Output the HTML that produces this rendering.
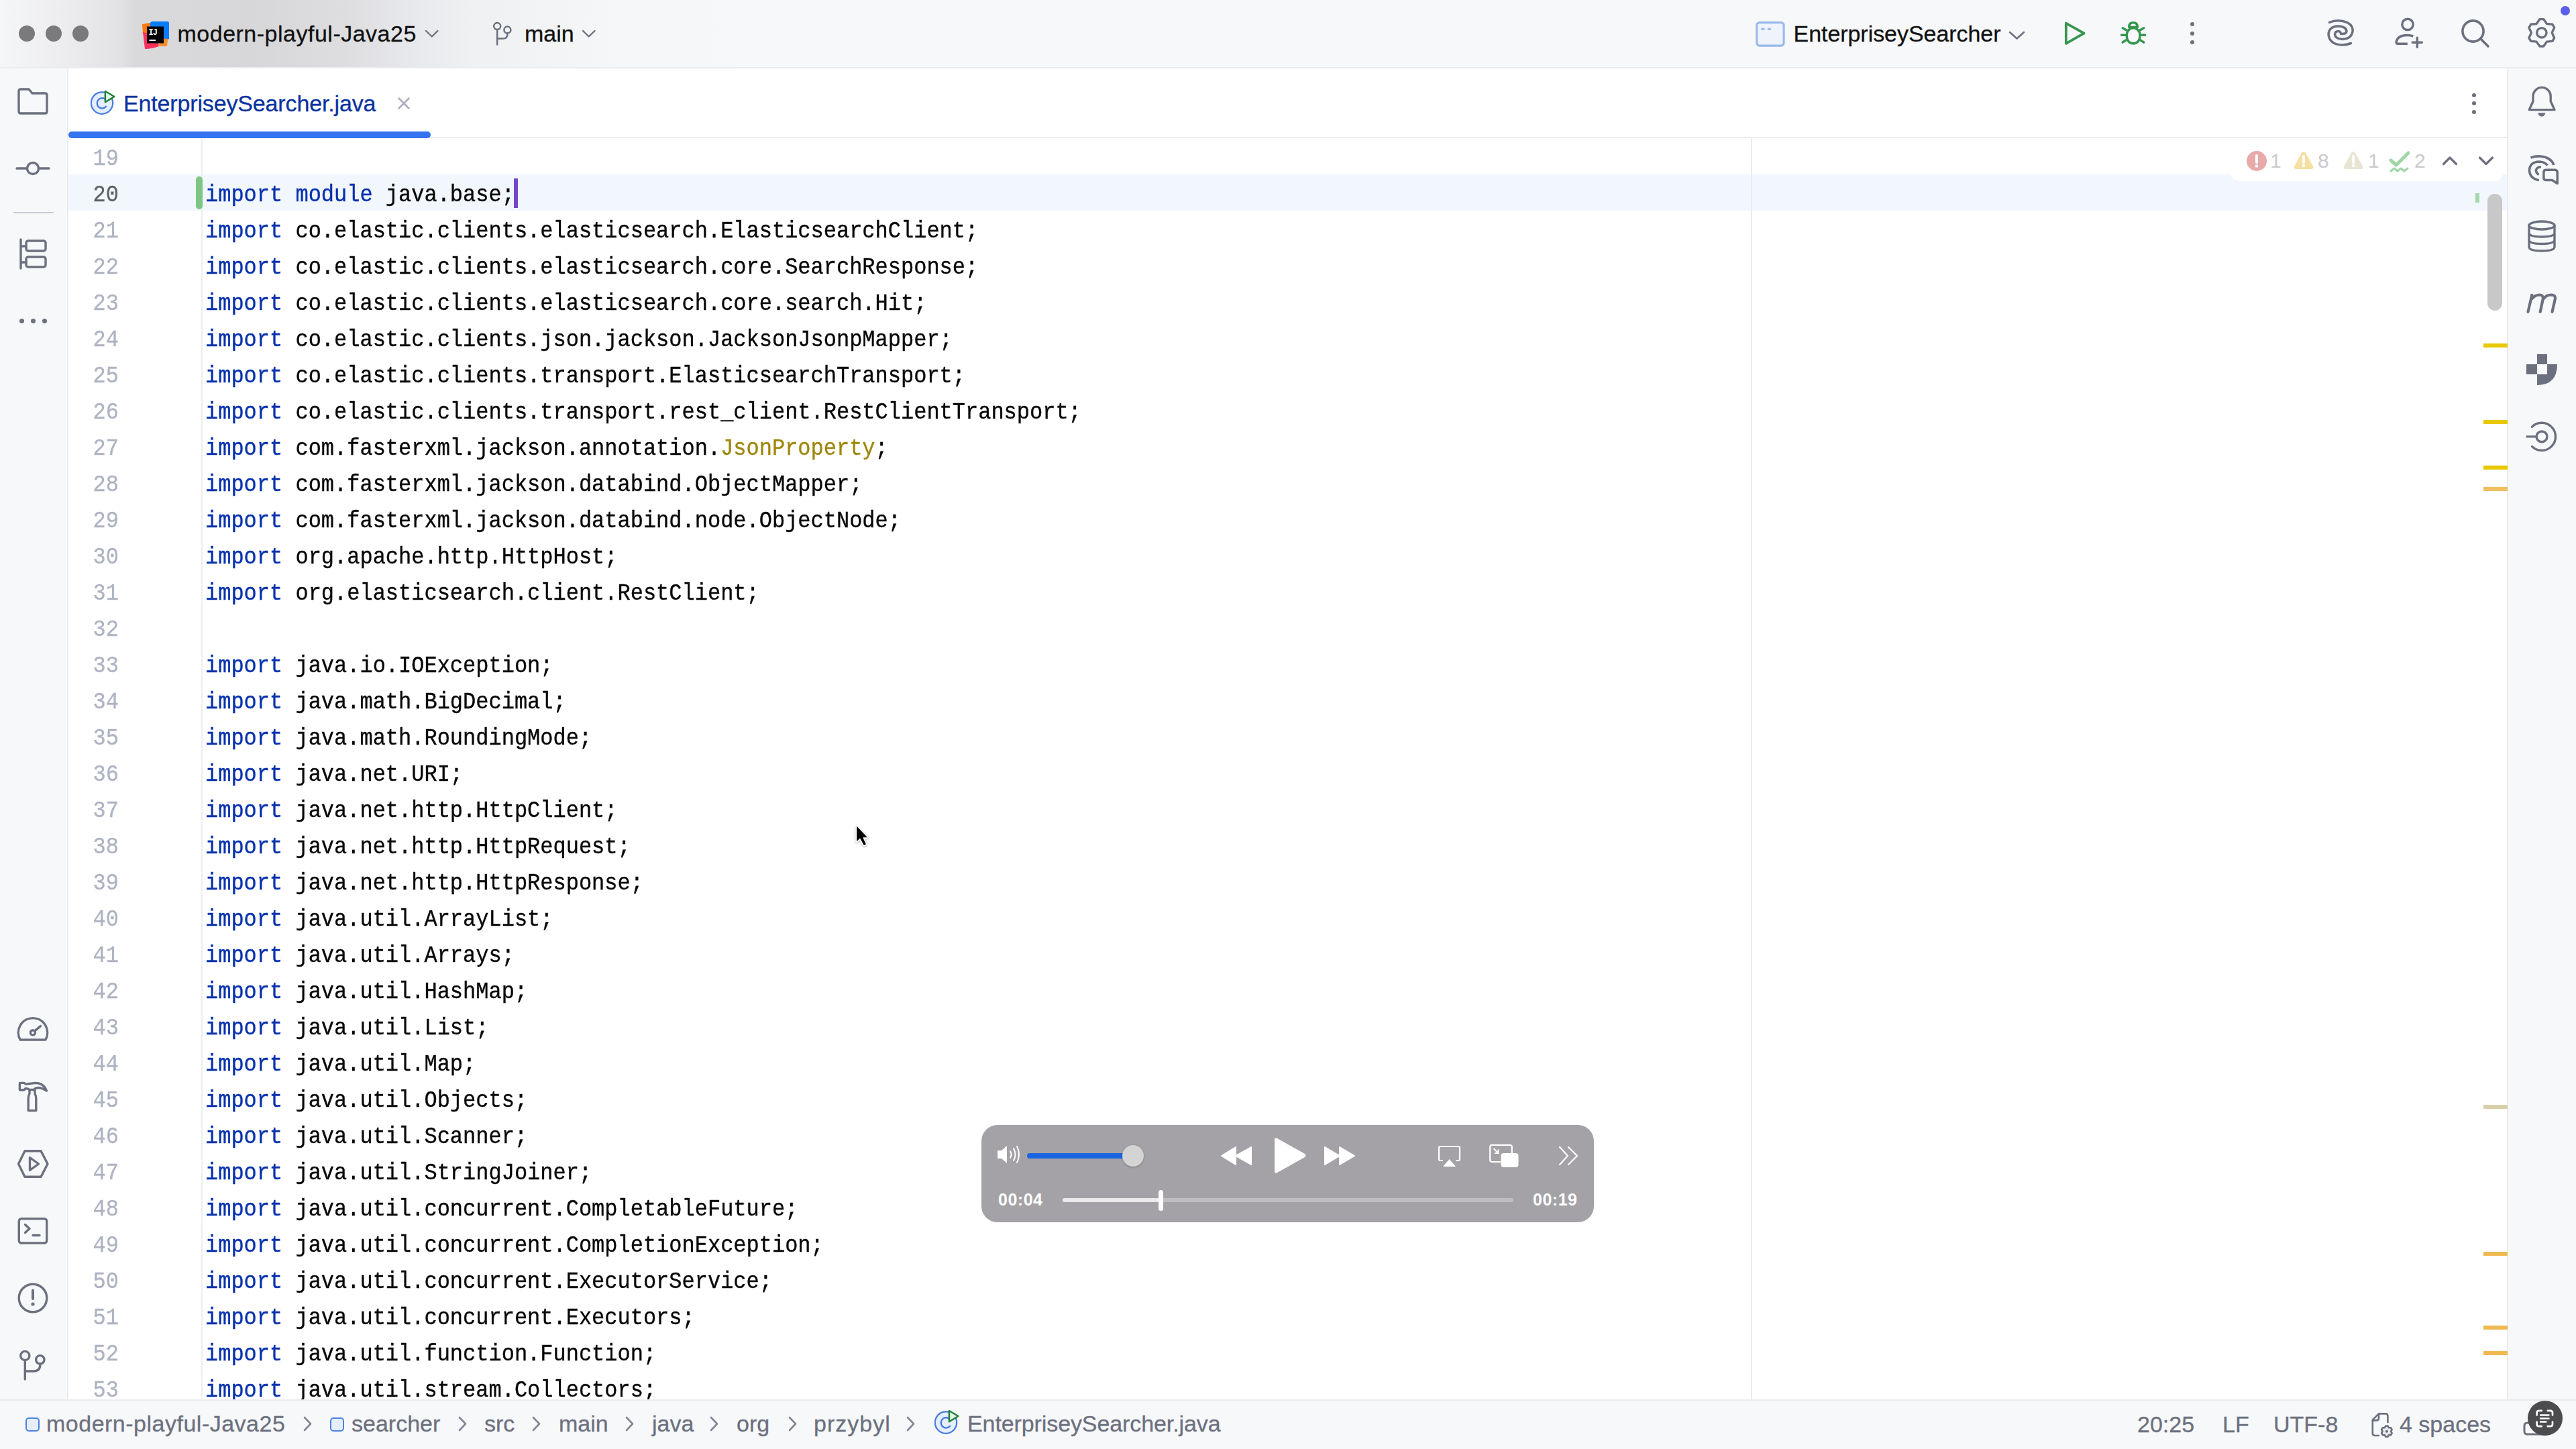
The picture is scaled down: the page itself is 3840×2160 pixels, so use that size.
<!DOCTYPE html><html><head><meta charset="utf-8"><style>
*{margin:0;padding:0;box-sizing:border-box}
html,body{width:3840px;height:2160px;overflow:hidden;background:#fff}
body{position:relative;font-family:"Liberation Sans",sans-serif}
.a{position:absolute}
.ui{position:absolute;font-family:"Liberation Sans",sans-serif;font-size:34px;line-height:40px;white-space:pre;-webkit-text-stroke:0.3px currentColor}
.code{position:absolute;left:306px;font-family:"Liberation Mono",monospace;font-size:32px;line-height:54px;white-space:pre;color:#080808;-webkit-text-stroke:0.35px currentColor;transform:scaleY(1.09);transform-origin:0 35.5px}
.ln{position:absolute;left:110px;width:67px;text-align:right;font-family:"Liberation Mono",monospace;font-size:32px;line-height:54px;color:#aeb3c2;-webkit-text-stroke:0.3px currentColor;transform:scaleY(1.09);transform-origin:0 35.5px}
.k{color:#0731ad}
.an{color:#9e880d}
</style></head><body>
<div class="a" style="left:0;top:0;width:3840px;height:100px;background:linear-gradient(90deg,#f5f6f8 0px,#ededf0 90px,#e2e2e5 180px,#d9d9dc 200px,#d7d7da 380px,#dedee1 520px,#e8e9ec 620px,#eff0f2 700px,#f5f6f8 900px,#f7f8fa 1100px,#f7f8fa 3840px)"></div>
<div class="a" style="left:0;top:100px;width:3840px;height:2px;background:#ebecf0"></div>
<div class="a" style="left:28px;top:38px;width:24px;height:24px;border-radius:12px;background:#7a7a7c"></div>
<div class="a" style="left:68px;top:38px;width:24px;height:24px;border-radius:12px;background:#7a7a7c"></div>
<div class="a" style="left:108px;top:38px;width:24px;height:24px;border-radius:12px;background:#7a7a7c"></div>
<svg style="position:absolute;left:210px;top:31px" width="44" height="44" viewBox="0 0 44 44" ><path d="M2 5 L14 3 L13 20 L3 20 Z" fill="#f97a12"/><path d="M14 3 Q15 1 17 1 L40 1 Q42 1 42 3 L42 27 L30 33 L14 20 Z" fill="#087cfa"/><path d="M3 17 L24 22 L27 38 Q16 42 6 42 Z" fill="#fe315d"/><path d="M30 26 L40 27 L39 38 L26 38 Z" fill="#fb8f2a"/><rect x="9" y="8.5" width="25" height="25" fill="#000"/><text x="11.5" y="20.5" font-family="Liberation Mono" font-weight="bold" font-size="12" fill="#fff" letter-spacing="-1">IJ</text><rect x="12.5" y="28" width="9.5" height="2" fill="#fff"/></svg>
<div class="ui" style="left:264.5px;top:30px;color:#111;letter-spacing:0.5px">modern-playful-Java25</div>
<svg style="position:absolute;left:633px;top:43px" width="21.5" height="14.5" viewBox="0 0 21.5 14.5" ><path d="M2 3 L10.75 11.5 L19.5 3" fill="none" stroke="#6c707e" stroke-width="2.4" stroke-linecap="round" stroke-linejoin="round"/></svg>
<svg style="position:absolute;left:720px;top:25px" width="60" height="50" viewBox="0 0 60 50" ><circle cx="21.2" cy="14.1" r="5" fill="none" stroke="#6c707e" stroke-width="2.5"/><circle cx="36.4" cy="19.6" r="5" fill="none" stroke="#6c707e" stroke-width="2.5"/><path d="M21.2 19.1 V41.6 M21.2 32.6 H30 Q36.4 32.6 36.4 26 V24.6" fill="none" stroke="#6c707e" stroke-width="2.5" stroke-linecap="round"/></svg>
<div class="ui" style="left:782px;top:30px;color:#111">main</div>
<svg style="position:absolute;left:867.3px;top:43px" width="21.5" height="14.5" viewBox="0 0 21.5 14.5" ><path d="M2 3 L10.75 11.5 L19.5 3" fill="none" stroke="#6c707e" stroke-width="2.4" stroke-linecap="round" stroke-linejoin="round"/></svg>
<svg style="position:absolute;left:2605px;top:20px" width="75" height="60" viewBox="0 0 75 60" ><rect x="13.8" y="13.6" width="40.3" height="34.5" rx="4" fill="#eef3fc" stroke="#9ab8eb" stroke-width="3.1"/><path d="M21.5 23.2 H24.2 M31.1 23.2 H33.7" stroke="#9ab8eb" stroke-width="3" stroke-linecap="round"/></svg>
<div class="ui" style="left:2673.5px;top:30px;color:#111;letter-spacing:-0.05px">EnterpriseySearcher</div>
<svg style="position:absolute;left:2994px;top:45px" width="25" height="15.5" viewBox="0 0 25 15.5" ><path d="M2 3 L12.5 12.5 L23 3" fill="none" stroke="#6c707e" stroke-width="2.5" stroke-linecap="round" stroke-linejoin="round"/></svg>
<svg style="position:absolute;left:3060px;top:20px" width="60" height="60" viewBox="0 0 60 60" ><path d="M19.8 14.6 L46.6 29.7 L19.8 44.8 Z" fill="none" stroke="#369650" stroke-width="3.7" stroke-linejoin="round"/></svg>
<svg style="position:absolute;left:3140px;top:30px" width="80" height="50" viewBox="0 0 80 50" ><rect x="30.4" y="11.8" width="19.4" height="23" rx="9.7" fill="none" stroke="#369650" stroke-width="3.5"/><path d="M33.7 10.5 Q33.7 3.8 40 3.8 Q46.3 3.8 46.3 10.5 Z" fill="none" stroke="#369650" stroke-width="3.5" stroke-linejoin="round"/><path d="M24.2 11.8 L30.4 15.3 M22.5 22.3 H28.3 M24.2 33.1 L30 29.6 M55.7 11.8 L49.6 15.3 M57.7 22.3 H51.9 M55.7 33.1 L50 29.6" stroke="#369650" stroke-width="3.5" stroke-linecap="round"/></svg>
<div class="a" style="left:3265px;top:33px;width:6px;height:6px;border-radius:3px;background:#6c707e"></div>
<div class="a" style="left:3265px;top:47px;width:6px;height:6px;border-radius:3px;background:#6c707e"></div>
<div class="a" style="left:3265px;top:60px;width:6px;height:6px;border-radius:3px;background:#6c707e"></div>
<svg style="position:absolute;left:3460px;top:20px" width="60" height="60" viewBox="0 0 60 60" ><path d="M12.4 13.3 Q26 8 40 14 Q48 19 47 27 Q45 38 32 38.5 Q21 38 20.5 31 Q21 26.5 25.5 26.5 Q28 26.5 29 28.5" fill="none" stroke="#6c707e" stroke-width="3.5" stroke-linecap="round"/><path d="M44.5 44.5 Q38 47 31 47 Q12 46 11 31 Q12 19.5 25 19 Q38 19.5 38 27 Q37 31 29.5 30.5" fill="none" stroke="#6c707e" stroke-width="3.5" stroke-linecap="round"/></svg>
<svg style="position:absolute;left:3560px;top:20px" width="60" height="60" viewBox="0 0 60 60" ><circle cx="29" cy="16.4" r="8.2" fill="none" stroke="#6c707e" stroke-width="3.5"/><path d="M28.8 45.2 H14.5 Q11.8 45.2 12 42.5 Q14 32.5 28.5 32.5 Q33.5 32.5 37.3 34" fill="none" stroke="#6c707e" stroke-width="3.5"/><path d="M43.3 36.3 V50.3 M36.3 43.3 H50.3" stroke="#6c707e" stroke-width="3.5" stroke-linecap="round"/></svg>
<svg style="position:absolute;left:3660px;top:20px" width="60" height="60" viewBox="0 0 60 60" ><circle cx="26.5" cy="26.5" r="15.6" fill="none" stroke="#6c707e" stroke-width="3.6"/><path d="M38 38 L49 49" stroke="#6c707e" stroke-width="3.6" stroke-linecap="round"/></svg>
<svg style="position:absolute;left:3760px;top:20px" width="60" height="60" viewBox="0 0 60 60" ><path d="M25.96 8.60 L31.64 8.60 L36.50 15.46 L44.88 16.24 L47.71 21.16 L44.20 28.80 L47.71 36.44 L44.88 41.36 L36.50 42.14 L31.64 49.00 L25.96 49.00 L21.10 42.14 L12.72 41.36 L9.89 36.44 L13.40 28.80 L9.89 21.16 L12.72 16.24 L21.10 15.46 Z" fill="none" stroke="#6c707e" stroke-width="3.4" stroke-linejoin="round"/><circle cx="28.8" cy="28.8" r="7.2" fill="none" stroke="#6c707e" stroke-width="3.4"/></svg>
<div class="a" style="left:3817px;top:9px;width:14px;height:14px;border-radius:7px;background:#5a5ee8"></div>
<div class="a" style="left:0;top:102px;width:101px;height:1984px;background:#f7f8fa"></div>
<div class="a" style="left:100px;top:102px;width:2px;height:1984px;background:#ebecf0"></div>
<svg style="position:absolute;left:24px;top:130px" width="50" height="42" viewBox="0 0 50 42" ><path d="M4 6 Q4 3 7 3 L19 3 L24 9 L43 9 Q46 9 46 12 L46 36 Q46 39 43 39 L7 39 Q4 39 4 36 Z" fill="none" stroke="#6c707e" stroke-width="3.4" stroke-linecap="round" stroke-linejoin="round"/></svg>
<svg style="position:absolute;left:22px;top:236px" width="54" height="30" viewBox="0 0 54 30" ><circle cx="27" cy="15" r="8.5" fill="none" stroke="#6c707e" stroke-width="3.4" stroke-linecap="round" stroke-linejoin="round"/><path d="M3 15 H18.5 M35.5 15 H51" fill="none" stroke="#6c707e" stroke-width="3.4" stroke-linecap="round" stroke-linejoin="round"/></svg>
<div class="a" style="left:20px;top:315.5px;width:60px;height:2px;background:#c9ccd6"></div>
<svg style="position:absolute;left:27px;top:354px" width="46" height="50" viewBox="0 0 46 50" ><path d="M4 3 V46 M4 13 H12 M4 37 H12" fill="none" stroke="#6c707e" stroke-width="3.4" stroke-linecap="round" stroke-linejoin="round"/><rect x="12" y="5" width="29" height="15" rx="3" fill="none" stroke="#6c707e" stroke-width="3.4" stroke-linecap="round" stroke-linejoin="round"/><rect x="12" y="29" width="29" height="15" rx="3" fill="none" stroke="#6c707e" stroke-width="3.4" stroke-linecap="round" stroke-linejoin="round"/></svg>
<div class="a" style="left:28.5px;top:474.5px;width:7px;height:7px;border-radius:4px;background:#6c707e"></div>
<div class="a" style="left:45.5px;top:474.5px;width:7px;height:7px;border-radius:4px;background:#6c707e"></div>
<div class="a" style="left:62.5px;top:474.5px;width:7px;height:7px;border-radius:4px;background:#6c707e"></div>
<svg style="position:absolute;left:23px;top:1515px" width="52" height="42" viewBox="0 0 52 42" ><path d="M7.1 35 A21.7 21.7 0 1 1 44.9 35 Z" fill="none" stroke="#6c707e" stroke-width="3.4" stroke-linecap="round" stroke-linejoin="round"/><circle cx="25.9" cy="24.3" r="3.6" fill="none" stroke="#6c707e" stroke-width="3.4" stroke-linecap="round" stroke-linejoin="round"/><path d="M29 21.6 L37.4 14.6" fill="none" stroke="#6c707e" stroke-width="3.4" stroke-linecap="round" stroke-linejoin="round"/></svg>
<svg style="position:absolute;left:20px;top:1600px" width="60" height="70" viewBox="0 0 60 70" ><path d="M9.4 14.4 L16 14.4 Q18 16.5 21 15.8 L33 14.4 Q45 14.4 49.5 26 Q42 21 36 21.5 Q32 22 30 24.5 L24 24.5 Q22 22.5 18 22.5 L16 24.7 H9.4 Z" fill="none" stroke="#6c707e" stroke-width="3.4" stroke-linecap="round" stroke-linejoin="round"/><path d="M24 24.5 V30.5 Q22.2 33.5 22.2 37 V55.5 H33.8 V37 Q33.8 33.5 32 30.5 V24.5" fill="none" stroke="#6c707e" stroke-width="3.4" stroke-linecap="round" stroke-linejoin="round"/></svg>
<svg style="position:absolute;left:23px;top:1712px" width="52" height="46" viewBox="0 0 52 46" ><path d="M14 3.8 H38 L48 23 L38 42.2 H14 L4.5 23 Z" fill="none" stroke="#6c707e" stroke-width="3.4" stroke-linecap="round" stroke-linejoin="round"/><path d="M21.5 13.5 L34.5 23 L21.5 32.5 Z" fill="none" stroke="#6c707e" stroke-width="3.4" stroke-linecap="round" stroke-linejoin="round"/></svg>
<svg style="position:absolute;left:24px;top:1813px" width="50" height="44" viewBox="0 0 50 44" ><rect x="4.3" y="3.7" width="41.4" height="36.3" rx="3.5" fill="none" stroke="#6c707e" stroke-width="3.4" stroke-linecap="round" stroke-linejoin="round"/><path d="M13.5 12.5 L20 18.5 L13.5 24.5 M25 28.5 H35" fill="none" stroke="#6c707e" stroke-width="3.4" stroke-linecap="round" stroke-linejoin="round"/></svg>
<svg style="position:absolute;left:24px;top:1910px" width="50" height="50" viewBox="0 0 50 50" ><circle cx="25" cy="25" r="20.8" fill="none" stroke="#6c707e" stroke-width="3.4" stroke-linecap="round" stroke-linejoin="round"/><path d="M25 13.5 V26" stroke="#6c707e" stroke-width="4" stroke-linecap="round"/><circle cx="25" cy="34" r="2.6" fill="#6c707e"/></svg>
<svg style="position:absolute;left:26px;top:2011px" width="44" height="48" viewBox="0 0 44 48" ><circle cx="11.3" cy="10" r="6.6" fill="none" stroke="#6c707e" stroke-width="3.4" stroke-linecap="round" stroke-linejoin="round"/><circle cx="33.8" cy="15.8" r="6.2" fill="none" stroke="#6c707e" stroke-width="3.4" stroke-linecap="round" stroke-linejoin="round"/><path d="M11.3 16.6 V45 M11.3 33 H24 Q33.8 33 33.8 23.5 V22" fill="none" stroke="#6c707e" stroke-width="3.4" stroke-linecap="round" stroke-linejoin="round"/></svg>
<div class="a" style="left:3738px;top:102px;width:102px;height:1984px;background:#f7f8fa"></div>
<div class="a" style="left:3737px;top:206px;width:2px;height:1880px;background:#ebecf0"></div>
<div class="a" style="left:3737px;top:102px;width:2px;height:104px;background:#ebecf0"></div>
<svg style="position:absolute;left:3750px;top:110px" width="80" height="180" viewBox="0 0 80 180" ><path d="M26 41 V33.5 A13.1 13.1 0 0 1 52.2 33.5 V41 L58 53.6 H20.2 Z" fill="none" stroke="#6c707e" stroke-width="3.4" stroke-linecap="round" stroke-linejoin="round"/><path d="M33.3 58.2 H44.3 A5.5 5.5 0 0 1 33.3 58.2 Z" fill="#6c707e"/><path d="M22.5 125 Q30 122.5 37 123 Q53 124.5 57 136" fill="none" stroke="#6c707e" stroke-width="3.6"/><path d="M47.5 136.5 Q43 131 35 131 Q21 131.5 20.5 144 Q21 156 34.8 158.8" fill="none" stroke="#6c707e" stroke-width="3.6"/><path d="M38 139 Q32 138.5 30.5 143.5 Q30 147.5 34.5 150.5" fill="none" stroke="#6c707e" stroke-width="3.6"/><path d="M45.5 143.3 H58.5 Q62.2 143.3 62.2 147 V163.5 L54.5 158.6 H45.5 Q41.9 158.6 41.9 155 V147 Q41.9 143.3 45.5 143.3 Z" fill="none" stroke="#6c707e" stroke-width="3.5" stroke-linejoin="round"/></svg>
<svg style="position:absolute;left:3766px;top:327px" width="46" height="52" viewBox="0 0 46 52" ><ellipse cx="23" cy="9" rx="19" ry="6" fill="none" stroke="#6c707e" stroke-width="3.4" stroke-linecap="round" stroke-linejoin="round"/><path d="M4 9 V41 Q4 47 23 47 Q42 47 42 41 V9 M4 20 Q4 26 23 26 Q42 26 42 20 M4 30.5 Q4 36.5 23 36.5 Q42 36.5 42 30.5" fill="none" stroke="#6c707e" stroke-width="3.4" stroke-linecap="round" stroke-linejoin="round"/></svg>
<svg style="position:absolute;left:3755px;top:420px" width="70" height="60" viewBox="0 0 70 60" ><path d="M13.5 44.9 L19.3 19.8 M19.8 25 Q24 19.5 31 19.5 Q36.5 20 35.8 25.5 L31.7 44.9 M37 25 Q41 19.5 48.5 19.5 Q55 20 53.8 26 L49.5 44.9" fill="none" stroke="#6c707e" stroke-width="4.2" stroke-linecap="round" stroke-linejoin="round"/></svg>
<svg style="position:absolute;left:3766px;top:528px" width="46" height="46" viewBox="0 0 46 46" ><path d="M16 0 H31 V15 H16 Z M0 15 H16 V30 H0 Z M31 15 H46 Q46 46 16 46 V30 H31 Z" fill="#6c707e"/></svg>
<svg style="position:absolute;left:3755px;top:620px" width="70" height="60" viewBox="0 0 70 60" ><path d="M19.5 16.2 A20.6 20.6 0 1 1 19.5 45.6" fill="none" stroke="#6c707e" stroke-width="3.4" stroke-linecap="round" stroke-linejoin="round"/><circle cx="34" cy="30.9" r="7.9" fill="none" stroke="#6c707e" stroke-width="3.4" stroke-linecap="round" stroke-linejoin="round"/><path d="M12 30.9 H26" fill="none" stroke="#6c707e" stroke-width="3.4" stroke-linecap="round" stroke-linejoin="round"/></svg>
<div class="a" style="left:102px;top:204px;width:3635px;height:2px;background:#ebecf0"></div>
<svg style="position:absolute;left:135px;top:134px" width="40" height="40" viewBox="0 0 40 40" ><circle cx="17" cy="19.6" r="16.2" fill="#e4eefd" stroke="#4a7be0" stroke-width="2.3"/><path d="M21.1 13.3 A7.6 7.6 0 1 0 23.1 24.8" fill="none" stroke="#4a7be0" stroke-width="2.3" stroke-linecap="round"/><path d="M21.9 2 L35.4 10 L21.9 18.3 Z" fill="#e6fae8" stroke="#23803a" stroke-width="2.5" stroke-linejoin="round"/></svg>
<div class="ui" style="left:184px;top:133.5px;color:#0a32a0;letter-spacing:-0.15px">EnterpriseySearcher.java</div>
<svg style="position:absolute;left:590px;top:142px" width="24" height="24" viewBox="0 0 24 24" ><path d="M4.5 4.5 L19.5 19.5 M19.5 4.5 L4.5 19.5" stroke="#a8adbd" stroke-width="2.5" stroke-linecap="round"/></svg>
<div class="a" style="left:102px;top:196px;width:540px;height:10px;border-radius:5px;background:#3574f0"></div>
<div class="a" style="left:3685px;top:138.5px;width:6px;height:6px;border-radius:3px;background:#6c707e"></div>
<div class="a" style="left:3685px;top:151px;width:6px;height:6px;border-radius:3px;background:#6c707e"></div>
<div class="a" style="left:3685px;top:163.5px;width:6px;height:6px;border-radius:3px;background:#6c707e"></div>
<div class="a" style="left:102px;top:260px;width:3635px;height:54px;background:#f2f6fd"></div>
<div class="a" style="left:300px;top:206px;width:2px;height:1880px;background:#eeeff2"></div>
<div class="a" style="left:2610px;top:206px;width:2px;height:1880px;background:#ebecf0"></div>
<div class="a" style="left:292px;top:263px;width:10px;height:49px;border-radius:5px;background:#7fc585"></div>
<div class="ln" style="top:210.5px;">19</div>
<div class="ln" style="top:264.5px;color:#5f626d">20</div>
<div class="code" style="top:264.5px"><span class="k">import module</span> java.base;</div>
<div class="ln" style="top:318.5px;">21</div>
<div class="code" style="top:318.5px"><span class="k">import</span> co.elastic.clients.elasticsearch.ElasticsearchClient;</div>
<div class="ln" style="top:372.5px;">22</div>
<div class="code" style="top:372.5px"><span class="k">import</span> co.elastic.clients.elasticsearch.core.SearchResponse;</div>
<div class="ln" style="top:426.5px;">23</div>
<div class="code" style="top:426.5px"><span class="k">import</span> co.elastic.clients.elasticsearch.core.search.Hit;</div>
<div class="ln" style="top:480.5px;">24</div>
<div class="code" style="top:480.5px"><span class="k">import</span> co.elastic.clients.json.jackson.JacksonJsonpMapper;</div>
<div class="ln" style="top:534.5px;">25</div>
<div class="code" style="top:534.5px"><span class="k">import</span> co.elastic.clients.transport.ElasticsearchTransport;</div>
<div class="ln" style="top:588.5px;">26</div>
<div class="code" style="top:588.5px"><span class="k">import</span> co.elastic.clients.transport.rest_client.RestClientTransport;</div>
<div class="ln" style="top:642.5px;">27</div>
<div class="code" style="top:642.5px"><span class="k">import</span> com.fasterxml.jackson.annotation.<span class="an">JsonProperty</span>;</div>
<div class="ln" style="top:696.5px;">28</div>
<div class="code" style="top:696.5px"><span class="k">import</span> com.fasterxml.jackson.databind.ObjectMapper;</div>
<div class="ln" style="top:750.5px;">29</div>
<div class="code" style="top:750.5px"><span class="k">import</span> com.fasterxml.jackson.databind.node.ObjectNode;</div>
<div class="ln" style="top:804.5px;">30</div>
<div class="code" style="top:804.5px"><span class="k">import</span> org.apache.http.HttpHost;</div>
<div class="ln" style="top:858.5px;">31</div>
<div class="code" style="top:858.5px"><span class="k">import</span> org.elasticsearch.client.RestClient;</div>
<div class="ln" style="top:912.5px;">32</div>
<div class="ln" style="top:966.5px;">33</div>
<div class="code" style="top:966.5px"><span class="k">import</span> java.io.IOException;</div>
<div class="ln" style="top:1020.5px;">34</div>
<div class="code" style="top:1020.5px"><span class="k">import</span> java.math.BigDecimal;</div>
<div class="ln" style="top:1074.5px;">35</div>
<div class="code" style="top:1074.5px"><span class="k">import</span> java.math.RoundingMode;</div>
<div class="ln" style="top:1128.5px;">36</div>
<div class="code" style="top:1128.5px"><span class="k">import</span> java.net.URI;</div>
<div class="ln" style="top:1182.5px;">37</div>
<div class="code" style="top:1182.5px"><span class="k">import</span> java.net.http.HttpClient;</div>
<div class="ln" style="top:1236.5px;">38</div>
<div class="code" style="top:1236.5px"><span class="k">import</span> java.net.http.HttpRequest;</div>
<div class="ln" style="top:1290.5px;">39</div>
<div class="code" style="top:1290.5px"><span class="k">import</span> java.net.http.HttpResponse;</div>
<div class="ln" style="top:1344.5px;">40</div>
<div class="code" style="top:1344.5px"><span class="k">import</span> java.util.ArrayList;</div>
<div class="ln" style="top:1398.5px;">41</div>
<div class="code" style="top:1398.5px"><span class="k">import</span> java.util.Arrays;</div>
<div class="ln" style="top:1452.5px;">42</div>
<div class="code" style="top:1452.5px"><span class="k">import</span> java.util.HashMap;</div>
<div class="ln" style="top:1506.5px;">43</div>
<div class="code" style="top:1506.5px"><span class="k">import</span> java.util.List;</div>
<div class="ln" style="top:1560.5px;">44</div>
<div class="code" style="top:1560.5px"><span class="k">import</span> java.util.Map;</div>
<div class="ln" style="top:1614.5px;">45</div>
<div class="code" style="top:1614.5px"><span class="k">import</span> java.util.Objects;</div>
<div class="ln" style="top:1668.5px;">46</div>
<div class="code" style="top:1668.5px"><span class="k">import</span> java.util.Scanner;</div>
<div class="ln" style="top:1722.5px;">47</div>
<div class="code" style="top:1722.5px"><span class="k">import</span> java.util.StringJoiner;</div>
<div class="ln" style="top:1776.5px;">48</div>
<div class="code" style="top:1776.5px"><span class="k">import</span> java.util.concurrent.CompletableFuture;</div>
<div class="ln" style="top:1830.5px;">49</div>
<div class="code" style="top:1830.5px"><span class="k">import</span> java.util.concurrent.CompletionException;</div>
<div class="ln" style="top:1884.5px;">50</div>
<div class="code" style="top:1884.5px"><span class="k">import</span> java.util.concurrent.ExecutorService;</div>
<div class="ln" style="top:1938.5px;">51</div>
<div class="code" style="top:1938.5px"><span class="k">import</span> java.util.concurrent.Executors;</div>
<div class="ln" style="top:1992.5px;">52</div>
<div class="code" style="top:1992.5px"><span class="k">import</span> java.util.function.Function;</div>
<div class="ln" style="top:2046.5px;">53</div>
<div class="code" style="top:2046.5px"><span class="k">import</span> java.util.stream.Collectors;</div>
<div class="a" style="left:766px;top:266px;width:6px;height:44px;background:#7446cc"></div>
<div class="a" style="left:3325px;top:206px;width:407px;height:64px;background:#fff;border-radius:0 0 14px 14px"></div>
<svg style="position:absolute;left:3348px;top:224px" width="32" height="32" viewBox="0 0 32 32" ><circle cx="16" cy="16" r="15" fill="#e7a9a9"/><path d="M16 8 V18" stroke="#fff" stroke-width="4" stroke-linecap="round"/><circle cx="16" cy="23.5" r="2.3" fill="#fff"/></svg>
<div class="a" style="left:3384px;top:222px;font-family:'Liberation Sans';font-size:30px;line-height:36px;color:#c9cacd">1</div>
<svg style="position:absolute;left:3417px;top:223px" width="34" height="32" viewBox="0 0 34 32" ><path d="M17 3 Q19 3 20 5 L31 25 Q32 29 28 29 L6 29 Q2 29 3 25 L14 5 Q15 3 17 3 Z" fill="#f5dfa1"/><path d="M17 10 V19" stroke="#fff" stroke-width="4" stroke-linecap="round"/><circle cx="17" cy="24" r="2.2" fill="#fff"/></svg>
<div class="a" style="left:3455px;top:222px;font-family:'Liberation Sans';font-size:30px;line-height:36px;color:#c9cacd">8</div>
<svg style="position:absolute;left:3491px;top:223px" width="34" height="32" viewBox="0 0 34 32" ><path d="M17 3 Q19 3 20 5 L31 25 Q32 29 28 29 L6 29 Q2 29 3 25 L14 5 Q15 3 17 3 Z" fill="#e9e5d4"/><path d="M17 10 V19" stroke="#fff" stroke-width="4" stroke-linecap="round"/><circle cx="17" cy="24" r="2.2" fill="#fff"/></svg>
<div class="a" style="left:3530px;top:222px;font-family:'Liberation Sans';font-size:30px;line-height:36px;color:#c9cacd">1</div>
<svg style="position:absolute;left:3560px;top:224px" width="36" height="36" viewBox="0 0 36 36" ><path d="M4 15 L12 22 L30 4" fill="none" stroke="#9fd6a6" stroke-width="5" stroke-linecap="round" stroke-linejoin="round"/><path d="M4 31 L9 27 L14 31 L19 27 L24 31 L29 27" fill="none" stroke="#9fd6a6" stroke-width="3" stroke-linecap="round" stroke-linejoin="round"/></svg>
<div class="a" style="left:3599px;top:222px;font-family:'Liberation Sans';font-size:30px;line-height:36px;color:#c9cacd">2</div>
<svg style="position:absolute;left:3640px;top:231px" width="24" height="17" viewBox="0 0 24 17" ><path d="M2.5 13.5 L12 4 L21.5 13.5" fill="none" stroke="#6c707e" stroke-width="3.2" stroke-linecap="round" stroke-linejoin="round"/></svg>
<svg style="position:absolute;left:3694px;top:231px" width="24" height="17" viewBox="0 0 24 17" ><path d="M2.5 4 L12 13.5 L21.5 4" fill="none" stroke="#6c707e" stroke-width="3.2" stroke-linecap="round" stroke-linejoin="round"/></svg>
<div class="a" style="left:3708px;top:289px;width:22px;height:174px;border-radius:11px;background:#c8c8c9"></div>
<div class="a" style="left:3690px;top:288px;width:6px;height:14px;background:#a6d8ad"></div>
<div class="a" style="left:3702px;top:512px;width:36px;height:6px;background:#e8c800"></div>
<div class="a" style="left:3702px;top:626px;width:36px;height:6px;background:#e8c800"></div>
<div class="a" style="left:3702px;top:694px;width:36px;height:6px;background:#e8c800"></div>
<div class="a" style="left:3702px;top:726px;width:36px;height:6px;background:#f0c060"></div>
<div class="a" style="left:3702px;top:1647px;width:36px;height:6px;background:#dacfab"></div>
<div class="a" style="left:3702px;top:1866px;width:36px;height:6px;background:#f0b950"></div>
<div class="a" style="left:3702px;top:1976px;width:36px;height:6px;background:#f0b950"></div>
<div class="a" style="left:3702px;top:2014px;width:36px;height:6px;background:#f0b950"></div>
<div class="a" style="left:0;top:2086px;width:3840px;height:74px;background:#f7f8fa"></div>
<div class="a" style="left:0;top:2086px;width:3840px;height:2px;background:#ebecf0"></div>
<div class="a" style="left:38px;top:2113px;width:21px;height:21px;border-radius:5px;border:2.5px solid #4f82e3;background:#e6eefc"></div>
<div class="ui" style="left:69px;top:2102px;color:#6c707e;letter-spacing:0.5px">modern-playful-Java25</div>
<svg style="position:absolute;left:451px;top:2110px" width="16" height="26" viewBox="0 0 16 26" ><path d="M3 3 L12 12.5 L3 22" fill="none" stroke="#818594" stroke-width="2.6" stroke-linecap="round" stroke-linejoin="round"/></svg>
<div class="a" style="left:492px;top:2113px;width:21px;height:21px;border-radius:5px;border:2.5px solid #4f82e3;background:#e6eefc"></div>
<div class="ui" style="left:524px;top:2102px;color:#6c707e">searcher</div>
<svg style="position:absolute;left:682px;top:2110px" width="16" height="26" viewBox="0 0 16 26" ><path d="M3 3 L12 12.5 L3 22" fill="none" stroke="#818594" stroke-width="2.6" stroke-linecap="round" stroke-linejoin="round"/></svg>
<div class="ui" style="left:722px;top:2102px;color:#6c707e">src</div>
<svg style="position:absolute;left:792px;top:2110px" width="16" height="26" viewBox="0 0 16 26" ><path d="M3 3 L12 12.5 L3 22" fill="none" stroke="#818594" stroke-width="2.6" stroke-linecap="round" stroke-linejoin="round"/></svg>
<div class="ui" style="left:833px;top:2102px;color:#6c707e">main</div>
<svg style="position:absolute;left:931px;top:2110px" width="16" height="26" viewBox="0 0 16 26" ><path d="M3 3 L12 12.5 L3 22" fill="none" stroke="#818594" stroke-width="2.6" stroke-linecap="round" stroke-linejoin="round"/></svg>
<div class="ui" style="left:972px;top:2102px;color:#6c707e">java</div>
<svg style="position:absolute;left:1057px;top:2110px" width="16" height="26" viewBox="0 0 16 26" ><path d="M3 3 L12 12.5 L3 22" fill="none" stroke="#818594" stroke-width="2.6" stroke-linecap="round" stroke-linejoin="round"/></svg>
<div class="ui" style="left:1098px;top:2102px;color:#6c707e">org</div>
<svg style="position:absolute;left:1174px;top:2110px" width="16" height="26" viewBox="0 0 16 26" ><path d="M3 3 L12 12.5 L3 22" fill="none" stroke="#818594" stroke-width="2.6" stroke-linecap="round" stroke-linejoin="round"/></svg>
<div class="ui" style="left:1213px;top:2102px;color:#6c707e;letter-spacing:1px">przybyl</div>
<svg style="position:absolute;left:1350px;top:2110px" width="16" height="26" viewBox="0 0 16 26" ><path d="M3 3 L12 12.5 L3 22" fill="none" stroke="#818594" stroke-width="2.6" stroke-linecap="round" stroke-linejoin="round"/></svg>
<svg style="position:absolute;left:1393px;top:2101px" width="40" height="40" viewBox="0 0 40 40" ><circle cx="17" cy="19.6" r="16.2" fill="#e4eefd" stroke="#4a7be0" stroke-width="2.3"/><path d="M21.1 13.3 A7.6 7.6 0 1 0 23.1 24.8" fill="none" stroke="#4a7be0" stroke-width="2.3" stroke-linecap="round"/><path d="M21.9 2 L35.4 10 L21.9 18.3 Z" fill="#e6fae8" stroke="#23803a" stroke-width="2.5" stroke-linejoin="round"/></svg>
<div class="ui" style="left:1442px;top:2102px;color:#6c707e;letter-spacing:-0.1px">EnterpriseySearcher.java</div>
<div class="ui" style="left:3186px;top:2103px;color:#6c707e">20:25</div>
<div class="ui" style="left:3313px;top:2103px;color:#6c707e">LF</div>
<div class="ui" style="left:3389px;top:2103px;color:#6c707e">UTF-8</div>
<svg style="position:absolute;left:3525px;top:2095px" width="50" height="55" viewBox="0 0 50 55" ><path d="M34.4 26 V16 Q34.4 12.4 30.8 12.4 H21 L11.8 21.6 V41.5 Q11.8 45 15.3 45 H22" fill="none" stroke="#6c707e" stroke-width="2.6" stroke-linejoin="round"/><path d="M21 12.4 V19 Q21 22.4 17.6 22.4 H11.8" fill="none" stroke="#6c707e" stroke-width="2.6" stroke-linejoin="round"/><path d="M31.34 30.65 L34.46 30.65 L36.05 33.24 L39.09 33.32 L40.65 36.03 L39.20 38.70 L40.65 41.37 L39.09 44.08 L36.05 44.16 L34.46 46.75 L31.34 46.75 L29.75 44.16 L26.71 44.08 L25.15 41.37 L26.60 38.70 L25.15 36.03 L26.71 33.32 L29.75 33.24 Z" fill="#e8eaf0" stroke="#6c707e" stroke-width="2.6" stroke-linejoin="round"/><circle cx="32.9" cy="38.7" r="2" fill="#6c707e"/></svg>
<div class="ui" style="left:3577px;top:2103px;color:#6c707e">4 spaces</div>
<svg style="position:absolute;left:3758px;top:2116px" width="40" height="28" viewBox="0 0 40 28" ><rect x="5" y="5" width="32" height="17" rx="4" fill="none" stroke="#6c707e" stroke-width="3"/></svg>
<div class="a" style="left:3768px;top:2088px;width:52px;height:52px;border-radius:26px;background:#4c4c4f"></div>
<svg style="position:absolute;left:3772px;top:2092px" width="44" height="44" viewBox="0 0 44 44" ><path d="M9.6 17.5 V14 Q9.6 10.8 12.8 10.8 H16.8 M25.8 10.8 H29.8 Q33 10.8 33 14 V17.5 M33 27.5 V31 Q33 34.2 29.8 34.2 H25.8 M16.8 34.2 H12.8 Q9.6 34.2 9.6 31 V27.5" fill="none" stroke="#fff" stroke-width="2.7" stroke-linecap="round"/><path d="M15 17.5 H27.5 M15 22.5 H27.5 M15 27.5 H23.5" stroke="#fff" stroke-width="2.4" stroke-linecap="round"/></svg>
<div class="a" style="left:1463px;top:1677px;width:913px;height:145px;border-radius:24px;background:#a4a2a6"></div>
<svg style="position:absolute;left:1485px;top:1705px" width="40" height="32" viewBox="0 0 40 32" ><path d="M2 10 H8 L16 3 V29 L8 22 H2 Z" fill="#fff"/><path d="M21 11 Q24 16 21 21 M26 7 Q31 16 26 25 M31 4 Q37 16 31 28" fill="none" stroke="#fff" stroke-width="2" stroke-linecap="round"/></svg>
<div class="a" style="left:1531px;top:1719px;width:160px;height:8px;border-radius:4px;background:#1b64e0"></div>
<div class="a" style="left:1673px;top:1707px;width:32px;height:32px;border-radius:16px;background:#d4d4d5;box-shadow:0 1px 3px rgba(0,0,0,0.25)"></div>
<svg style="position:absolute;left:1818px;top:1706px" width="52" height="34" viewBox="0 0 52 34" ><path d="M3 17 L24 4 V30 Z M24 17 L47 4 V30 Z" fill="#fff" stroke="#fff" stroke-width="2" stroke-linejoin="round"/></svg>
<svg style="position:absolute;left:1895px;top:1693px" width="58" height="62" viewBox="0 0 58 62" ><path d="M5 6 Q5 2 9 4 L50 27 Q53 29 50 32 L9 55 Q5 57 5 53 Z" fill="#fff"/></svg>
<svg style="position:absolute;left:1971px;top:1706px" width="52" height="34" viewBox="0 0 52 34" ><path d="M4 4 L26 17 L4 30 Z M26 4 L48 17 L26 30 Z" fill="#fff" stroke="#fff" stroke-width="2" stroke-linejoin="round"/></svg>
<svg style="position:absolute;left:2142px;top:1706px" width="38" height="36" viewBox="0 0 38 36" ><path d="M9 24 H5 Q3 24 3 22 V5 Q3 3 5 3 H32 Q34 3 34 5 V22 Q34 24 32 24 H28" fill="none" stroke="#fff" stroke-width="2.2"/><path d="M9 33 L18.5 22 L28 33 Z" fill="#fff"/></svg>
<svg style="position:absolute;left:2218px;top:1704px" width="48" height="40" viewBox="0 0 48 40" ><path d="M19.5 28 H6 Q3.2 28 3.2 25 V5.8 Q3.2 2.8 6.2 2.8 H32.8 Q35.8 2.8 35.8 5.8 V15" fill="none" stroke="#fff" stroke-width="2.2"/><rect x="19.5" y="15" width="26" height="21" rx="4" fill="#fff"/><path d="M8.5 8 L15.5 15 M15.5 9.5 V15 H10" fill="none" stroke="#fff" stroke-width="2"/></svg>
<svg style="position:absolute;left:2321px;top:1706px" width="36" height="34" viewBox="0 0 36 34" ><path d="M4 4 L16 17 L4 30 M17 4 L30 17 L17 30" fill="none" stroke="#fff" stroke-width="2.2" stroke-linecap="round" stroke-linejoin="round"/></svg>
<div class="a" style="left:1488px;top:1773px;font-family:'Liberation Sans';font-weight:bold;font-size:25px;line-height:30px;color:#fff;letter-spacing:0.5px">00:04</div>
<div class="a" style="left:2285px;top:1773px;font-family:'Liberation Sans';font-weight:bold;font-size:25px;line-height:30px;color:#fff;letter-spacing:0.5px">00:19</div>
<div class="a" style="left:1584px;top:1786px;width:672px;height:6px;border-radius:3px;background:#bebdc0"></div>
<div class="a" style="left:1584px;top:1786px;width:145px;height:6px;border-radius:3px;background:#eaeaea"></div>
<div class="a" style="left:1727px;top:1774px;width:7px;height:31px;border-radius:3.5px;background:#fff"></div>
<svg style="position:absolute;left:1272px;top:1227px" width="30" height="40" viewBox="0 0 30 40" ><path d="M5.1 4.4 V27.2 L10 22.6 L15.8 32.9 L18.9 31.4 L14.2 21.3 H21 Z" fill="#000" stroke="#fff" stroke-width="3.6" stroke-linejoin="round" paint-order="stroke" style="filter:drop-shadow(0 1px 1.5px rgba(0,0,0,0.3))"/></svg>
</body></html>
